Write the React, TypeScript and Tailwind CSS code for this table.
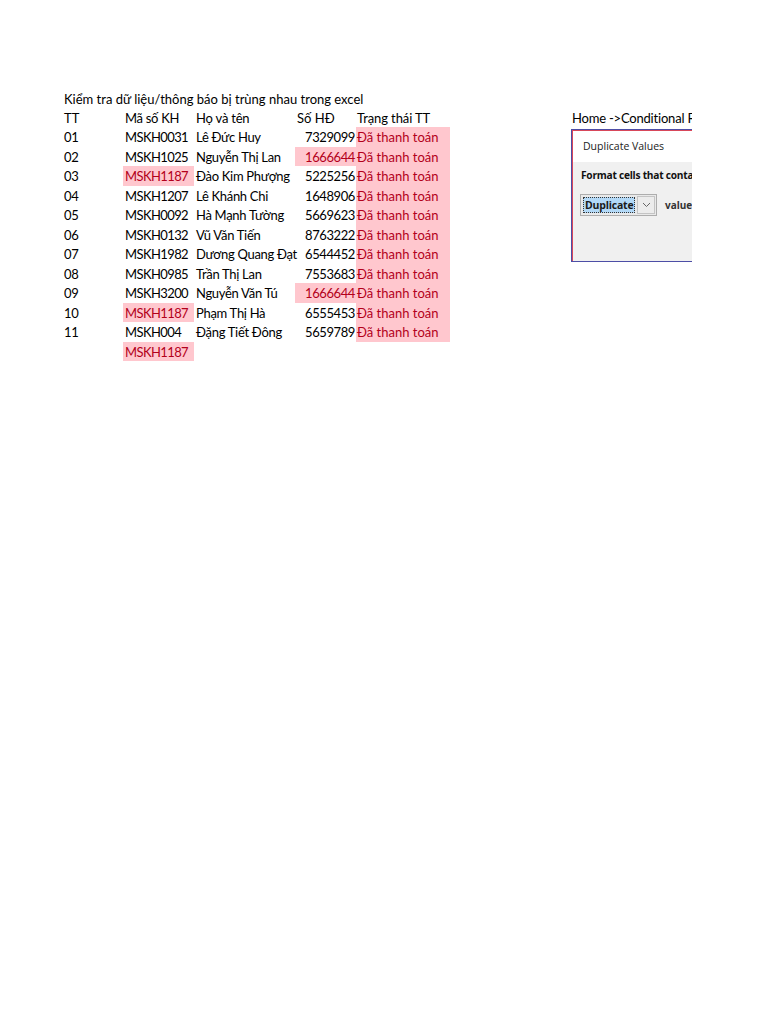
// Excel sheet snapshot: duplicate-value check table with conditional formatting,
// plus the clipped "Duplicate Values" dialog on the right.

type Row = { tt: string; ma: string; ten: string; hd: string; dupMa?: boolean; dupHd?: boolean };

const rows: Row[] = [
  { tt: '01', ma: 'MSKH0031', ten: 'Lê Đức Huy', hd: '7329099' },
  { tt: '02', ma: 'MSKH1025', ten: 'Nguyễn Thị Lan', hd: '1666644', dupHd: true },
  { tt: '03', ma: 'MSKH1187', ten: 'Đào Kim Phượng', hd: '5225256', dupMa: true },
  { tt: '04', ma: 'MSKH1207', ten: 'Lê Khánh Chi', hd: '1648906' },
  { tt: '05', ma: 'MSKH0092', ten: 'Hà Mạnh Tường', hd: '5669623' },
  { tt: '06', ma: 'MSKH0132', ten: 'Vũ Văn Tiến', hd: '8763222' },
  { tt: '07', ma: 'MSKH1982', ten: 'Dương Quang Đạt', hd: '6544452' },
  { tt: '08', ma: 'MSKH0985', ten: 'Trần Thị Lan', hd: '7553683' },
  { tt: '09', ma: 'MSKH3200', ten: 'Nguyễn Văn Tú', hd: '1666644', dupHd: true },
  { tt: '10', ma: 'MSKH1187', ten: 'Phạm Thị Hà', hd: '6555453', dupMa: true },
  { tt: '11', ma: 'MSKH004', ten: 'Đặng Tiết Đông', hd: '5659789' },
];

const dup = 'bg-[#ffc7ce] text-[#b3001b]';

export default function App() {
  return (
    <div className="min-h-[1024px] w-[768px] bg-white text-[13px] leading-[19.5px] text-black" style={{ fontFamily: 'Lato, "Open Sans", sans-serif' }}>
      <div className="flex pt-[88px]">
        {/* sheet */}
        <div className="ml-[62px] w-[388px] shrink-0">
          <div className="flex h-[19.5px] items-end whitespace-nowrap pl-[2px] leading-[18px]">Kiểm tra dữ liệu/thông báo bị trùng nhau trong excel</div>
          <div className="flex h-[19.5px] items-end whitespace-nowrap leading-[18px]">
            <div className="w-[61px] pl-[2px]">TT</div>
            <div className="w-[71px] pl-[2px] tracking-[-0.3px]">Mã số KH</div>
            <div className="w-[101px] pl-[2px] tracking-[-0.2px]">Họ và tên</div>
            <div className="w-[61px] pl-[2px]">Số HĐ</div>
            <div className="w-[94px] pl-[1px] tracking-[-0.1px]">Trạng thái TT</div>
          </div>
          {rows.map(r => (
            <div key={r.tt} className="flex h-[19.5px] whitespace-nowrap">
              <div className="w-[61px] pl-[2px] pt-[1px] tracking-[-0.3px]">{r.tt}</div>
              <div className={`w-[71px] pl-[2px] pt-[1px] tracking-[-0.6px] ${r.dupMa ? dup : ''}`}>{r.ma}</div>
              <div className="w-[101px] pl-[2px] pt-[1px] tracking-[-0.3px]">{r.ten}</div>
              <div className={`w-[61px] pr-[1px] pt-[1px] text-right tracking-[-0.4px] ${r.dupHd ? dup : ''}`}>{r.hd}</div>
              <div className={`w-[94px] pl-[1px] pt-[1px] ${dup}`}>Đã thanh toán</div>
            </div>
          ))}
          <div className="flex h-[19.5px] whitespace-nowrap">
            <div className="w-[61px]" />
            <div className={`w-[71px] pl-[2px] pt-[1px] tracking-[-0.6px] ${dup}`}>MSKH1187</div>
          </div>
        </div>

        {/* right side: hint + clipped dialog */}
        <div className="ml-[121px] w-[121px] overflow-hidden pt-[19.5px]">
          <div className="flex h-[19.5px] items-end whitespace-nowrap pl-[1px] leading-[18px] tracking-[-0.2px]">Home -&gt;Conditional Formatting -&gt; Highlight Cells Rules</div>
          <div className="mt-[2px] h-[133px] w-[200px] border border-[#4d4ea6] bg-[#f0f0f0]" style={{ fontFamily: '"Open Sans", "DejaVu Sans", sans-serif' }}>
            <div className="h-full border-l border-t border-[#d8475a]">
              <div className="flex h-[31px] items-center bg-white pl-[10px] text-[10.5px] leading-none text-[#222]">Duplicate Values</div>
              <div className="pl-[8px] pt-[6px] text-[10.2px] font-bold leading-[14px] tracking-[-0.25px] text-[#111]">Format cells that contain:</div>
              <div className="mt-[12px] flex items-center pl-[7px]">
                <div className="flex h-[22px] w-[77px] items-center border border-[#adadad] bg-[#e9e9e9]">
                  <div className="ml-[2px] flex h-[16px] w-[52px] items-center border border-dotted border-[#333] bg-[#b3d9f7] pl-[1px] text-[10.5px] font-bold leading-none tracking-[-0.2px] text-[#1a1a1a]">Duplicate</div>
                  <div className="ml-auto mr-[1px] flex h-[18px] w-[18px] items-center justify-center border border-[#c4c4c4] bg-[#ececec]">
                    <svg width="9" height="6" viewBox="0 0 9 6" fill="none">
                      <path d="M1 1l3.5 3.5L8 1" stroke="#666" strokeWidth="1" />
                    </svg>
                  </div>
                </div>
                <div className="ml-[8px] text-[10px] font-bold leading-none text-[#333]">values with</div>
              </div>
            </div>
          </div>
        </div>
      </div>
    </div>
  );
}
